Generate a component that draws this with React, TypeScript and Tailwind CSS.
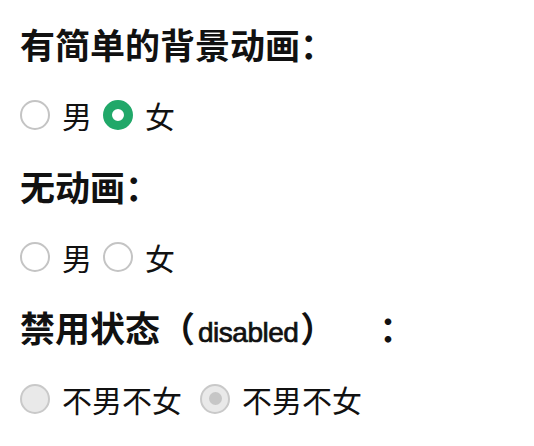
import { useState } from "react";

type RadioProps = {
  checked: boolean;
  disabled?: boolean;
  animated?: boolean;
  onSelect?: () => void;
  className?: string;
};

function Radio({ checked, disabled, animated, onSelect, className = "" }: RadioProps) {
  // disabled look: grey fill, grey dot when checked
  if (disabled) {
    return (
      <span
        className={`flex h-[30px] w-[30px] shrink-0 items-center justify-center rounded-full border-2 border-[#c9c9c9] bg-[#e9e9e9] ${className}`}
      >
        {checked && <span className="h-[13px] w-[13px] rounded-full bg-[#c6c6c6]" />}
      </span>
    );
  }

  return (
    <button
      type="button"
      role="radio"
      aria-checked={checked}
      onClick={onSelect}
      className={`h-[30px] w-[30px] shrink-0 cursor-pointer rounded-full bg-white ${
        animated ? "transition-all duration-200" : ""
      } ${checked ? "border-[9px] border-[#21a869]" : "border-2 border-[#c4c4c4]"} ${className}`}
    />
  );
}

const rowText = "text-[30px] leading-none text-[#111]";
const heading = "text-[35px] font-semibold leading-none text-[#111]";

export default function App() {
  const [animatedSex, setAnimatedSex] = useState("女");
  const [plainSex, setPlainSex] = useState("");

  return (
    <div className="min-h-screen bg-white px-[20px] pt-[8px] font-['Noto_Sans_CJK_SC',sans-serif]">
      {/* 有背景动画 */}
      <div className="flex h-[71px] items-center">
        <h3 className={heading}>有简单的背景动画：</h3>
      </div>
      <div className="flex h-[71px] items-center">
        <Radio animated checked={animatedSex === "男"} onSelect={() => setAnimatedSex("男")} />
        <span className={`ml-[12px] ${rowText}`}>男</span>
        <Radio
          animated
          className="ml-[11px]"
          checked={animatedSex === "女"}
          onSelect={() => setAnimatedSex("女")}
        />
        <span className={`ml-[12px] ${rowText}`}>女</span>
      </div>

      {/* 无动画 */}
      <div className="flex h-[71px] items-center">
        <h3 className={heading}>无动画：</h3>
      </div>
      <div className="flex h-[71px] items-center">
        <Radio checked={plainSex === "男"} onSelect={() => setPlainSex("男")} />
        <span className={`ml-[12px] ${rowText}`}>男</span>
        <Radio className="ml-[11px]" checked={plainSex === "女"} onSelect={() => setPlainSex("女")} />
        <span className={`ml-[12px] ${rowText}`}>女</span>
      </div>

      {/* 禁用 */}
      <div className="flex h-[71px] items-center">
        <h3 className={`flex items-baseline ${heading}`}>
          <span>禁用状态（</span>
          <span className="ml-[3px] mr-[2px] font-['Liberation_Sans',sans-serif] text-[28px] font-normal tracking-[-0.5px] [-webkit-text-stroke:0.7px_#111]">
            disabled
          </span>
          <span>）</span>
          <span className="ml-[44px]">：</span>
        </h3>
      </div>
      <div className="flex h-[71px] items-center">
        <Radio disabled checked={false} />
        <span className={`ml-[12px] ${rowText}`}>不男不女</span>
        <Radio disabled checked className="ml-[18px]" />
        <span className={`ml-[12px] ${rowText}`}>不男不女</span>
      </div>
    </div>
  );
}
